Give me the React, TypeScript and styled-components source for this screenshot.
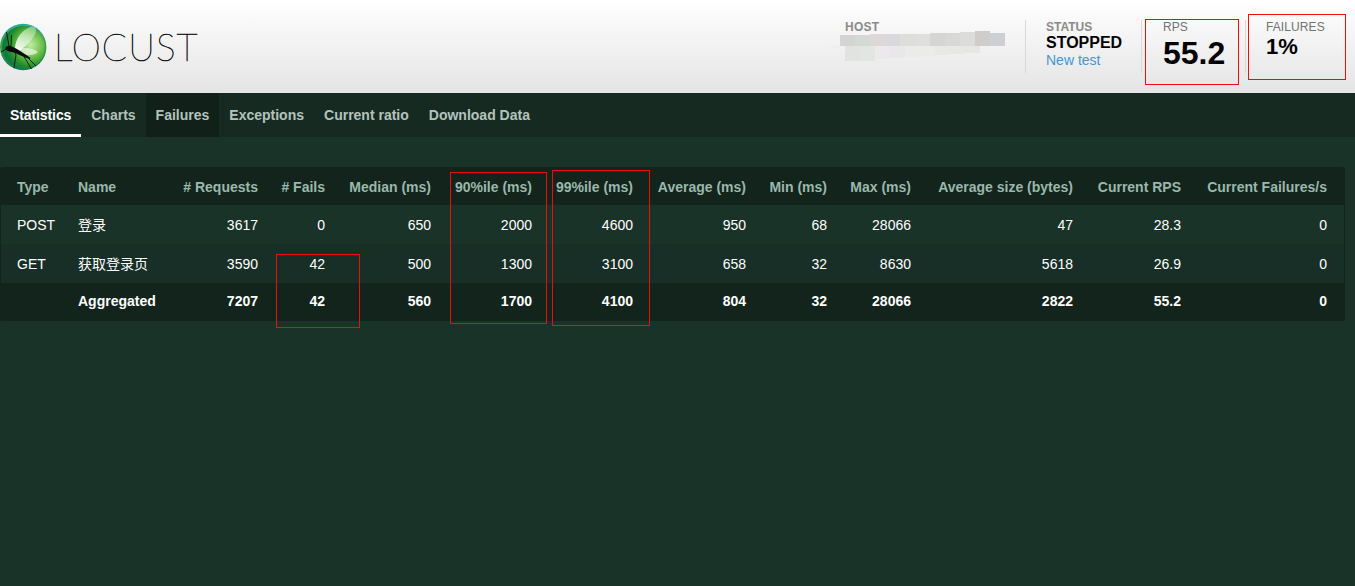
import React from "react";
import styled, { createGlobalStyle } from "styled-components";

const Global = createGlobalStyle`
  html, body { margin: 0; padding: 0; background: #1a3329; }
  body { font-family: "Liberation Sans", Arial, "Noto Sans CJK SC", sans-serif; font-size: 14px; }
  #root { min-height: 586px; }
`;
const Page = styled.div`
  position: relative;
  width: 1355px;
  height: 586px;
  overflow: hidden;
  background: #1a3329;
`;
const Header = styled.header`
  height: 93px;
  display: flex;
  justify-content: space-between;
  background: linear-gradient(to bottom, #ffffff 0%, #e4e4e4 100%);
`;
const Brand = styled.div`
  display: flex;
  align-items: center;
  gap: 6px;
  height: 93px;
`;
const BrandName = styled.span`
  font-family: "Lato", sans-serif;
  font-weight: 100;
  font-size: 37px;
  line-height: 37px;
  color: #111;
  letter-spacing: 1.1px;
  -webkit-text-stroke: 0.55px #111;
`;
const Stats = styled.div`
  display: flex;
  padding-top: 20px;
  height: 53px;
`;
const Stat = styled.div<{ $w: number; $line?: boolean; $pad?: number }>`
  width: ${(p) => p.$w}px;
  box-sizing: border-box;
  height: 53px;
  padding-left: ${(p) => p.$pad ?? 20}px;
  border-left: ${(p) => (p.$line ? "1px solid #d8d8d8" : "none")};
`;
const Label = styled.div`
  font-size: 12px;
  line-height: 14px;
  font-weight: 700;
  color: #8a8a8a;
  letter-spacing: 0.25px;
  text-transform: uppercase;
`;
const StatusLabel = styled(Label)`
  letter-spacing: 0;
`;
const Thin = styled(Label)`
  font-weight: 400;
  color: #737373;
  letter-spacing: 0.1px;
`;
const StatusValue = styled.div`
  margin-top: 1px;
  font-size: 16px;
  line-height: 16px;
  font-weight: 700;
  color: #000;
`;
const NewTest = styled.a`
  display: block;
  margin-top: 1px;
  font-size: 14px;
  line-height: 17px;
  color: #4a94c9;
  text-decoration: none;
`;
const BigValue = styled.div<{ $size: number; $top: number }>`
  font-size: ${(p) => p.$size}px;
  line-height: ${(p) => p.$size}px;
  margin-top: ${(p) => p.$top}px;
  font-weight: 700;
  color: #000;
`;
const Tabs = styled.nav`
  height: 44px;
  display: flex;
  background: #162a22;
`;
const Tab = styled.a<{ $active?: boolean; $hover?: boolean }>`
  box-sizing: border-box;
  height: 44px;
  padding: 14px 10px 0;
  font-size: 14px;
  line-height: 16px;
  font-weight: 700;
  letter-spacing: ${(p) => (p.$active ? "-0.1px" : "0")};
  color: ${(p) => (p.$active ? "#ffffff" : "#b3c3bc")};
  background: ${(p) => (p.$hover ? "#11211a" : "transparent")};
  border-bottom: 3px solid ${(p) => (p.$active ? "#ffffff" : "transparent")};
`;
const Panel = styled.main`
  padding-top: 30px;
`;
const Table = styled.table`
  width: 1345px;
  table-layout: fixed;
  border-collapse: separate;
  border-spacing: 0;
  background: #13241d;
  border-radius: 3px;
  padding: 0 1px;
  box-sizing: border-box;
`;
const Th = styled.th<{ $left?: boolean }>`
  box-sizing: border-box;
  height: 38px;
  padding: 1px 17px 0 ${(p) => (p.$left ? "16px" : "0")};
  font-size: 14px;
  line-height: 16px;
  font-weight: 700;
  white-space: nowrap;
  color: #9ab8ab;
  text-align: ${(p) => (p.$left ? "left" : "right")};
`;
const Row = styled.tr<{ $odd?: boolean }>`
  background: ${(p) => (p.$odd ? "#1a3329" : "#182f27")};
`;
const Td = styled.td<{ $left?: boolean }>`
  box-sizing: border-box;
  height: 39px;
  padding: 0 17px 0 ${(p) => (p.$left ? "16px" : "0")};
  font-size: 14px;
  line-height: 16px;
  color: #fff;
  white-space: nowrap;
  text-align: ${(p) => (p.$left ? "left" : "right")};
`;
const TotalRow = styled.tr`
  background: #13241d;
`;
const TotalCell = styled.td<{ $left?: boolean }>`
  box-sizing: border-box;
  height: 38px;
  padding: 0 17px 3px ${(p) => (p.$left ? "16px" : "0")};
  font-size: 14px;
  line-height: 16px;
  font-weight: 700;
  color: #fff;
  white-space: nowrap;
  text-align: ${(p) => (p.$left ? "left" : "right")};
`;
const Marker = styled.div<{ $x: number; $y: number; $w: number; $h: number }>`
  position: absolute;
  box-sizing: border-box;
  left: ${(p) => p.$x}px;
  top: ${(p) => p.$y}px;
  width: ${(p) => p.$w}px;
  height: ${(p) => p.$h}px;
  border: 1px solid #f20d0d;
  pointer-events: none;
`;
const HostBlur = styled.svg`
  position: absolute;
  left: 828px;
  top: 29px;
`;

const LogoMark = () => (
  <svg width="48" height="48" viewBox="0 0 48 48" aria-hidden="true">
    <defs>
      <radialGradient id="ball" cx="66%" cy="45%" r="60%">
        <stop offset="0%" stopColor="#c2eca6" />
        <stop offset="45%" stopColor="#70c24e" />
        <stop offset="85%" stopColor="#1f8c26" />
        <stop offset="100%" stopColor="#0f7a45" />
      </radialGradient>
      <linearGradient id="wing" x1="0.85" y1="0" x2="0.15" y2="1">
        <stop offset="0%" stopColor="#b8e4ae" stopOpacity="0.55" />
        <stop offset="100%" stopColor="#ffffff" stopOpacity="1" />
      </linearGradient>
      <linearGradient id="rim" x1="0" y1="0" x2="0" y2="1">
        <stop offset="0%" stopColor="#2fa9a6" />
        <stop offset="50%" stopColor="#3a9f38" />
        <stop offset="100%" stopColor="#0f7a55" />
      </linearGradient>
    </defs>
    <circle cx="23.2" cy="24" r="23.2" fill="url(#rim)" />
    <circle cx="23.6" cy="24.2" r="21.4" fill="url(#ball)" />
    <path d="M15 26 C15 15 23 6 32 3.5 C36 3 37 7 35 11 C31 19 24 25 17 29 Z" fill="url(#wing)" />
    <path d="M17 26 C24 24 33 25 38 29 C32 34 24 33 18 28 Z" fill="#ffffff" opacity="0.6" />
    <path d="M5.5 24.5 C7 22.5 10 22.5 12 23.5 L17 26 C21 28.5 26 31.5 30.5 35 L29.5 36 C24 34 18 31.5 14 29.5 C11 29 7 28 5.5 26.5 Z" fill="#0a0e0a" />
    <g stroke="#0b120c" strokeWidth="0.9" fill="none">
      <path d="M9 23 L6.5 9" />
      <path d="M11 23 L11.5 12" />
      <path d="M14.5 29 L16 32 L14 45" />
      <path d="M23 32 L31.5 46" />
      <path d="M27 34 L36 43" />
      <path d="M6 26 L1 29" />
    </g>
  </svg>
);

const topColors = ["#d4d4d4", "#d3dad4", "#dcd8d8", "#d9d9dc", "#dddddb", "#dfdfdd", "#d5d5d3", "#d8d8d6", "#dcdcda", "#cfcdcb", "#cdd0d3"];
const bottomColors = ["#e0e3e0", "#e3e5e3", "#ebe9e9", "#e8e8ea", "#ebebe9", "#ebebe9", "#e8e8e6", "#e7e7e5", "#e6e6e4"];
const topY = [6, 6, 5, 5, 5, 5, 4, 4, 3, 2, 4];
const bottomH = [15, 15, 13, 12, 11, 10, 9, 8, 7];
const HostMosaic = () => (
  <HostBlur width="180" height="34" viewBox="0 0 180 34" aria-hidden="true">
    <path d="M0 18 L12 16 L12 20 Z" fill="#eeeeee" />
    {topColors.map((f, i) => (
      <rect key={i} x={12 + i * 15} y={topY[i]} width={15} height={17 - topY[i]} fill={f} />
    ))}
    {bottomColors.map((f, i) => (
      <rect key={i} x={17 + i * 15} y={17} width={15} height={bottomH[i]} fill={f} />
    ))}
  </HostBlur>
);

const colWidths = [61, 103, 110, 67, 106, 101, 101, 113, 81, 84, 162, 108, 146];
const heads = ["Type", "Name", "# Requests", "# Fails", "Median (ms)", "90%ile (ms)", "99%ile (ms)", "Average (ms)", "Min (ms)", "Max (ms)", "Average size (bytes)", "Current RPS", "Current Failures/s"];
const rows = [
  ["POST", "登录", "3617", "0", "650", "2000", "4600", "950", "68", "28066", "47", "28.3", "0"],
  ["GET", "获取登录页", "3590", "42", "500", "1300", "3100", "658", "32", "8630", "5618", "26.9", "0"],
];
const total = ["", "Aggregated", "7207", "42", "560", "1700", "4100", "804", "32", "28066", "2822", "55.2", "0"];
const tabs = ["Statistics", "Charts", "Failures", "Exceptions", "Current ratio", "Download Data"];
const markers = [
  { x: 1145, y: 19, w: 94, h: 66 },
  { x: 1248, y: 14, w: 98, h: 66 },
  { x: 276, y: 254, w: 84, h: 74 },
  { x: 450, y: 172, w: 97, h: 152 },
  { x: 552, y: 170, w: 98, h: 156 },
];

export default function App() {
  return (
    <Page>
      <Global />
      <Header>
        <Brand>
          <LogoMark />
          <BrandName>LOCUST</BrandName>
        </Brand>
        <Stats>
          <Stat $w={180} $pad={0}>
            <Label>Host</Label>
          </Stat>
          <Stat $w={116} $line>
            <StatusLabel>Status</StatusLabel>
            <StatusValue>STOPPED</StatusValue>
            <NewTest>New test</NewTest>
          </Stat>
          <Stat $w={104} $line $pad={21}>
            <Thin>RPS</Thin>
            <BigValue $size={32} $top={3}>55.2</BigValue>
          </Stat>
          <Stat $w={110} $line>
            <Thin>Failures</Thin>
            <BigValue $size={22} $top={2}>1%</BigValue>
          </Stat>
        </Stats>
      </Header>
      <HostMosaic />
      <Tabs>
        {tabs.map((t, i) => (
          <Tab key={t} $active={i === 0} $hover={i === 2}>{t}</Tab>
        ))}
      </Tabs>
      <Panel>
        <Table>
          <colgroup>
            {colWidths.map((w, i) => (
              <col key={i} style={{ width: w }} />
            ))}
          </colgroup>
          <thead>
            <tr>
              {heads.map((h, i) => (
                <Th key={h} $left={i < 2}>{h}</Th>
              ))}
            </tr>
          </thead>
          <tbody>
            {rows.map((r, ri) => (
              <Row key={ri} $odd={ri === 0}>
                {r.map((c, i) => (
                  <Td key={i} $left={i < 2}>{c}</Td>
                ))}
              </Row>
            ))}
          </tbody>
          <tfoot>
            <TotalRow>
              {total.map((c, i) => (
                <TotalCell key={i} $left={i < 2}>{c}</TotalCell>
              ))}
            </TotalRow>
          </tfoot>
        </Table>
      </Panel>
      {markers.map((m, i) => (
        <Marker key={i} $x={m.x} $y={m.y} $w={m.w} $h={m.h} />
      ))}
    </Page>
  );
}
